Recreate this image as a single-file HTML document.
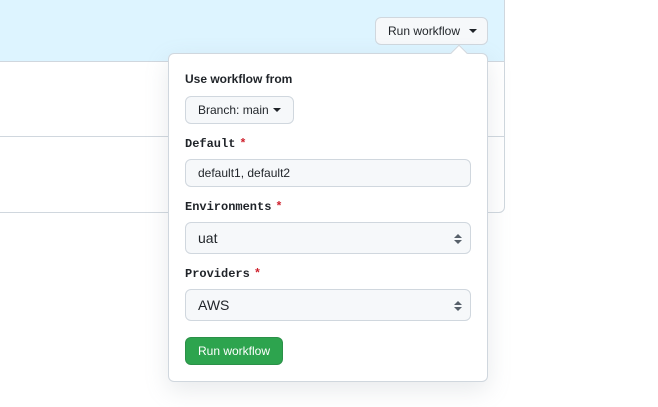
<!DOCTYPE html>
<html><head><style>
*{box-sizing:border-box;margin:0;padding:0}
body{width:658px;height:407px;background:#fff;position:relative;font-family:"Liberation Sans",sans-serif;color:#1f2328;overflow:hidden}
.box{position:absolute;left:-10px;top:-10px;width:515px;height:223px;border:1px solid #d0d7de;border-radius:6px}
.blue{position:absolute;left:0;top:0;width:504px;height:62px;background:#ddf4ff;border-bottom:1px solid #d0d7de}
.line{position:absolute;left:0;top:136px;width:504px;border-top:1px solid #d0d7de}
.btn{position:absolute;background:#f6f8fa;border:1px solid #d0d7de;border-radius:6px;font-size:12px;display:flex;align-items:center;padding-left:12px}
.caret{display:inline-block;width:0;height:0;border-left:4px solid transparent;border-right:4px solid transparent;border-top:4px solid #1f2328;margin-left:8px}
.pop{position:absolute;left:168px;top:53px;width:320px;height:329px;background:#fff;border:1px solid #d0d7de;border-radius:6px;box-shadow:0 8px 24px rgba(140,149,159,.2)}
.arrow{position:absolute;left:453px;top:47px;width:12px;height:12px;background:#fff;border-left:1px solid #d0d7de;border-top:1px solid #d0d7de;transform:rotate(45deg)}
.lbl{position:absolute;left:185px;font-family:"Liberation Mono",monospace;font-weight:bold;font-size:12px}
.lbl span{color:#cf222e;margin-left:4px}
.inp{position:absolute;left:185px;width:286px;background:#f6f8fa;border:1px solid #d0d7de;border-radius:6px;display:flex;align-items:center;padding-left:12px}
.sel:after{content:"";position:absolute;right:8px;top:11px;border-left:4px solid transparent;border-right:4px solid transparent;border-bottom:4px solid #57606a}
.sel:before{content:"";position:absolute;right:8px;top:17px;border-left:4px solid transparent;border-right:4px solid transparent;border-top:4px solid #57606a}
</style></head><body>
<div class="box"></div>
<div class="blue"></div>
<div class="line"></div>
<div class="btn" style="left:375px;top:17px;width:113px;height:28px">Run workflow<span class="caret" style="margin-left:9px"></span></div>
<div class="pop"></div>
<div class="arrow"></div>
<div style="position:absolute;left:185px;top:72px;font-size:12px;font-weight:bold">Use workflow from</div>
<div class="btn" style="left:185px;top:96px;width:109px;height:28px">Branch: main<span class="caret" style="margin-left:4px"></span></div>
<div class="lbl" style="top:137px">Default<span>*</span></div>
<div class="inp" style="top:159px;height:28px;font-size:12px">default1, default2</div>
<div class="lbl" style="top:200px">Environments<span>*</span></div>
<div class="inp sel" style="top:222px;height:32px;font-size:14px">uat</div>
<div class="lbl" style="top:267px">Providers<span>*</span></div>
<div class="inp sel" style="top:289px;height:32px;font-size:14px">AWS</div>
<div style="position:absolute;left:185px;top:337px;width:98px;height:28px;background:#2da44e;border:1px solid rgba(31,35,40,.15);border-radius:6px;color:#fff;font-size:12px;display:flex;align-items:center;justify-content:center">Run workflow</div>
</body></html>
